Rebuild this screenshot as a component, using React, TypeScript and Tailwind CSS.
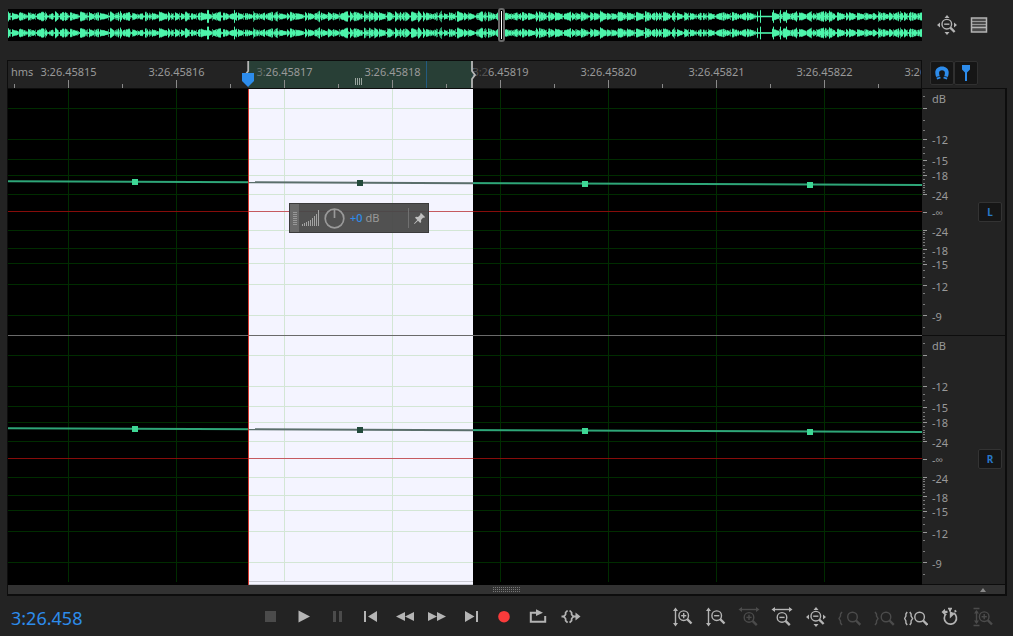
import type { ReactNode } from "react";

const times = ["15", "16", "17", "18", "19", "20", "21", "22", "23"];

const gridRows = [19, 50, 70, 86, 105, 141, 159, 174, 195, 226];
const gridCols = Array.from({ length: 24 }, (_, i) => 60 + i * 108);

const scaleLabels: [string, number][] = [
  ["dB", 14],
  ["-12", 55],
  ["-15", 76],
  ["-18", 91],
  ["-24", 111],
  ["-∞", 128],
  ["-24", 147],
  ["-18", 166],
  ["-15", 180],
  ["-12", 202],
  ["-9", 232],
];
const majorTicks = [19, 50, 71, 86, 105, 123, 141, 160, 175, 196, 226];
const minorTicks = [
  7, 31, 41, 58, 64, 76, 80, 83, 90, 94, 96, 98, 101, 103, 143, 145, 148, 150, 153, 156, 164, 168, 172,
  181, 188, 204, 215, 238,
];

type Peak = { outer: number; inner: number };

// peaks for the overview strip, one per column
function buildPeaks(count: number) {
  let seed = 97;
  const rand = () => {
    seed = (seed * 16807) % 2147483647;
    return seed / 2147483647;
  };
  const peaks: Peak[] = [];
  const push = (outer: number, inner: number) => peaks.push({ outer, inner });
  while (peaks.length < count) {
    const width = 2 + Math.floor(rand() * 7);
    const height = 3.6 + rand() * 2.2;
    const rising = rand() > 0.75;
    for (let i = 0; i < width; i++) {
      const step = rising ? width - 1 - i : i;
      const outer = height * (1 - (step / width) * 0.5) * (0.85 + rand() * 0.2);
      push(outer, outer * (rand() > 0.2 ? 0.85 : 0.45));
    }
    push(1.5 + rand() * 2.5, 0.6);
    if (rand() > 0.6) push(1, 0.6);
  }
  for (let i = 750; i < 764; i++) peaks[i] = { outer: 0.8, inner: 0.6 };
  for (const i of [199, 200, 226, 752, 765, 772, 778]) peaks[i] = { outer: 6.6, inner: 6 };
  return peaks.slice(0, count);
}

const peaks = buildPeaks(914);

function peakPath(center: number, key: keyof Peak) {
  return peaks
    .map((p, i) => `M${i + 0.5} ${(center - p[key]).toFixed(1)}V${(center + p[key]).toFixed(1)}`)
    .join("");
}

function Overview() {
  return (
    <div className="relative h-8 flex-1 bg-black">
      <svg className="block h-full w-full" viewBox="0 0 914 32" preserveAspectRatio="none">
        {[7.5, 24].map((y) => (
          <g key={y}>
            <path d={peakPath(y, "outer")} stroke="#2f9a6c" strokeWidth="1" />
            <path d={peakPath(y, "inner")} stroke="#4df5ab" strokeWidth="1" />
          </g>
        ))}
      </svg>
      <div className="absolute -top-px left-[54%] flex h-[34px] w-[7px] -translate-x-[4px] justify-center rounded-[3px] border-2 border-[#6a6a6a] bg-black py-px">
        <span className="w-px bg-white" />
      </div>
    </div>
  );
}

function Ruler() {
  return (
    <div className="relative h-[28px] flex-1 overflow-hidden border-t border-r border-[#0d0d0d] text-[11px] text-[#999]">
      <div className="absolute inset-y-0 left-[240px] w-[225px] bg-[#283f36]" />
      <span className="absolute top-[3px] left-[3px] leading-4">hms</span>
      <div className="relative flex h-full pl-[6px]">
        {times.map((t) => (
          <div key={t} className="relative flex h-full w-[108px] shrink-0 flex-col items-center justify-between pt-[3px]">
            <span className="pl-px leading-4">3:26.458{t}</span>
            <span className="h-[8px] w-px bg-[#8a8a8a]" />
            <span className="absolute bottom-0 left-0 h-[4px] w-px bg-[#8a8a8a]" />
          </div>
        ))}
      </div>
      <div className="absolute top-0 bottom-0 left-[418px] w-px bg-[#235a80]" />
      <div className="absolute bottom-[3px] left-[347px] flex gap-px">
        {[0, 1, 2, 3].map((i) => (
          <span key={i} className="h-[7px] w-px bg-[#9aa59f]" />
        ))}
      </div>
      <svg className="absolute top-0 left-[232px]" width="28" height="27" viewBox="0 0 28 27">
        <path d="M16 5H26V19H16Z" fill="#283f36" opacity="0.45" />
        <path d="M8.2 0V10L6 13" fill="none" stroke="#b5b5b5" strokeWidth="1.8" />
        <path d="M2 12H14V20L8 26L2 20Z" fill="#2d8ceb" />
      </svg>
      <svg className="absolute top-0 left-[461px]" width="18" height="27" viewBox="0 0 18 27">
        <path d="M5 0H18V19H5Z" fill="#232323" opacity="0.6" />
        <path d="M3 0V10L6 14L3 18V27" fill="none" stroke="#b5b5b5" strokeWidth="1.8" />
      </svg>
    </div>
  );
}

type GridProps = { color: string; zero: string; height: number; bottom: number };

function Grid({ color, zero, height, bottom }: GridProps) {
  return (
    <g shapeRendering="crispEdges">
      {gridCols.map((x) => (
        <line key={x} x1={x + 0.5} x2={x + 0.5} y1="0" y2={bottom} stroke={color} />
      ))}
      {gridRows.map((y) => (
        <line key={y} x1="0" x2="100%" y1={y + 0.5} y2={y + 0.5} stroke={color} />
      ))}
      <line x1="0" x2="100%" y1="122.5" y2="122.5" stroke={zero} />
      {height === 247 && <line x1="0" x2="100%" y1="246.5" y2="246.5" stroke="#6a6a6a" />}
    </g>
  );
}

function Samples({ line, dot }: { line: string; dot: string }) {
  return (
    <g>
      <line x1="0" y1="92.3" x2="914" y2="96" stroke={line} strokeWidth="2" />
      {[127, 352, 577, 802].map((x, i) => (
        <rect key={x} x={x - 3} y={90 + i} width="6" height="6" fill={dot} />
      ))}
    </g>
  );
}

function Channel({ id, height, bottom }: { id: string; height: number; bottom: number }) {
  return (
    <svg className="block w-full" height={height}>
      <clipPath id={id}>
        <rect x="240" y="0" width="225" height={height} />
      </clipPath>
      <Grid color="#002c00" zero="#860c0a" height={height} bottom={bottom} />
      <Samples line="#2ea678" dot="#3ed795" />
      <g clipPath={`url(#${id})`}>
        <rect x="240" y="0" width="225" height={height} fill="#f4f4ff" />
        <Grid color="#d3e6d5" zero="#c65a60" height={height} bottom={bottom} />
        <Samples line="#5a6e6b" dot="#234a3c" />
        {height > 247 && <path d="M240 245.5H465M240 248.5H465" stroke="#c9c9d2" />}
      </g>
      <line x1="240.5" x2="240.5" y1="0" y2={height} stroke="#d8392f" />
    </svg>
  );
}

function Hud() {
  return (
    <div className="absolute top-[114px] left-[281px] flex h-[30px] w-[140px] items-center border border-[#3b3b3b] bg-[#484848]/95 text-[11px]">
      <div className="flex h-full w-[9px] items-center justify-center bg-[#6a6a6a]">
        <svg width="4" height="13" viewBox="0 0 4 13">
          <path d="M1 0V13M3 0V13" stroke="#c4c4c4" strokeDasharray="1 1" />
        </svg>
      </div>
      <svg className="ml-[2px]" width="19" height="18" viewBox="0 0 19 18">
        <path
          d="M1.5 17V15M3.5 17V14M5.5 17V13M7.5 17V12M9.5 17V11M11.5 17V9M13.5 17V7M15.5 17V5M17.5 17V1"
          stroke="#a3a3a3"
        />
      </svg>
      <svg className="ml-[4px]" width="21" height="21" viewBox="0 0 21 21" fill="none" stroke="#999" strokeWidth="1.7">
        <circle cx="10.5" cy="10.5" r="9.3" />
        <path d="M10.5 2V10" />
      </svg>
      <span className="ml-[5px] font-medium text-[#2d8ceb]">+0</span>
      <span className="ml-[3px] text-[#999]">dB</span>
      <span className="ml-auto h-[20px] w-px bg-[#707070]" />
      <button aria-label="Pin" className="mr-[2px] ml-[4px]">
        <svg width="13" height="13" viewBox="0 0 13 13" fill="#c0c0c0">
          <path d="M8 1L12 5L11 6L10.2 5.6L8 8L8.2 10L7.2 11L5 8.7L1.5 12L1 11.5L4.3 8L2 5.8L3 4.8L5 5L7.4 2.8L7 2Z" />
        </svg>
      </button>
    </div>
  );
}

function Scale({ name, height }: { name: string; height: number }) {
  return (
    <div className="flex border-b border-[#0d0d0d]" style={{ height }}>
      <svg width="54" height={height - 1} fontSize="11" fill="#999">
        {majorTicks.map((y) => (
          <rect key={y} x="1" y={y} width="4" height="1" />
        ))}
        {minorTicks.map((y) => (
          <rect key={y} x="1" y={y} width="2" height="1" fill="#7c7c7c" />
        ))}
        {scaleLabels.map(([label, y]) => (
          <text key={y} x="10" y={y}>
            {label}
          </text>
        ))}
      </svg>
      <button className="mt-[113px] ml-[2px] h-[20px] w-[24px] rounded-xs border border-[#333] bg-[#161616] text-[10px] leading-none font-bold text-[#2878c8]">
        {name}
      </button>
    </div>
  );
}

type IconProps = { label: string; dim?: boolean; children: ReactNode };

function IconButton({ label, dim, children }: IconProps) {
  return (
    <button aria-label={label} disabled={dim} className={dim ? "text-[#4b4b4b]" : "text-[#b4b4b4]"}>
      <svg width="24" height="24" viewBox="0 0 24 24" fill="none" stroke="currentColor" strokeWidth="1.4">
        {children}
      </svg>
    </button>
  );
}

function Lens({ x, y, sign }: { x: number; y: number; sign?: "+" | "-" }) {
  return (
    <g transform={`translate(${x} ${y})`}>
      <circle r="4.8" />
      <path d="M3.5 3.5L7.8 7.8" strokeWidth="2.4" />
      {sign && <path d="M-2.6 0H2.6" />}
      {sign === "+" && <path d="M0 -2.6V2.6" />}
    </g>
  );
}

const vertical = (
  <>
    <path d="M5.5 4V20" />
    <path d="M5.5 2.5L8 6H3ZM5.5 21.5L8 18H3Z" fill="currentColor" stroke="none" />
  </>
);
const horizontal = (
  <>
    <path d="M3 4.5H21" />
    <path d="M1.5 4.5L5 2V7ZM22.5 4.5L19 2V7Z" fill="currentColor" stroke="none" />
  </>
);
const fourWays = (
  <>
    <path
      d="M12 2L14.5 5H9.5ZM12 22L14.5 19H9.5ZM2 12L5 9.5V14.5ZM22 12L19 9.5V14.5Z"
      fill="currentColor"
      stroke="none"
    />
    <Lens x={11.8} y={11.2} sign="-" />
  </>
);

function Transport() {
  return (
    <div className="flex w-[325px] justify-between">
      <IconButton label="Stop" dim>
        <path d="M7 6H18V17H7Z" fill="currentColor" stroke="none" />
      </IconButton>
      <IconButton label="Play">
        <path d="M7.5 5.5L19 11.5L7.5 17.5Z" fill="currentColor" stroke="none" />
      </IconButton>
      <IconButton label="Pause" dim>
        <path d="M8 6H11V17H8ZM14 6H17V17H14Z" fill="currentColor" stroke="none" />
      </IconButton>
      <IconButton label="Move to previous">
        <path d="M6 6H8V17H6ZM19 6V17L10 11.5Z" fill="currentColor" stroke="none" />
      </IconButton>
      <IconButton label="Rewind">
        <path d="M13 7V16L4 11.5ZM22 7V16L13 11.5Z" fill="currentColor" stroke="none" />
      </IconButton>
      <IconButton label="Fast forward">
        <path d="M3 7L12 11.5L3 16ZM12 7L21 11.5L12 16Z" fill="currentColor" stroke="none" />
      </IconButton>
      <IconButton label="Move to next">
        <path d="M6 6L15.5 11.5L6 17ZM17 6H19V17H17Z" fill="currentColor" stroke="none" />
      </IconButton>
      <IconButton label="Record">
        <circle cx="12" cy="11.7" r="5.8" fill="#f93b3b" stroke="none" />
      </IconButton>
      <IconButton label="Loop playback">
        <path d="M4.8 9V16.7H19.2V11M4.8 10V7.8H13" strokeWidth="2" />
        <path d="M10 4.2L17 7.8L10 11Z" fill="currentColor" stroke="none" />
      </IconButton>
      <IconButton label="Skip selection">
        <path d="M8.6 5.5L6.6 7.5V9.5L4.8 11.6L6.6 13.7V15.7L8.6 17.7" strokeWidth="1.7" />
        <path d="M10.6 5.5L12.6 7.5V9.5L14.4 11.6L12.6 13.7V15.7L10.6 17.7" strokeWidth="1.7" />
        <path d="M2.5 11.6H5M14 11.6H18" strokeWidth="2" />
        <path d="M16.5 7.6L21.5 11.6L16.5 15.6Z" fill="currentColor" stroke="none" />
      </IconButton>
    </div>
  );
}

function ZoomTools() {
  return (
    <div className="flex w-[325px] justify-between">
      <IconButton label="Zoom in amplitude">
        {vertical}
        <Lens x={13.7} y={10.7} sign="+" />
      </IconButton>
      <IconButton label="Zoom out amplitude">
        {vertical}
        <Lens x={13.7} y={10.7} sign="-" />
      </IconButton>
      <IconButton label="Zoom in time" dim>
        {horizontal}
        <Lens x={12} y={12.4} sign="+" />
      </IconButton>
      <IconButton label="Zoom out time">
        {horizontal}
        <Lens x={12} y={12.4} sign="-" />
      </IconButton>
      <IconButton label="Zoom out full">{fourWays}</IconButton>
      <IconButton label="Zoom in at in point" dim>
        <path d="M5 7L3.5 9V11L2 13.5L3.5 16V18L5 20" />
        <Lens x={15.5} y={12} />
      </IconButton>
      <IconButton label="Zoom in at out point" dim>
        <path d="M4 7L5.5 9V11L7 13.5L5.5 16V18L4 20" />
        <Lens x={15} y={12} />
      </IconButton>
      <IconButton label="Zoom to selection">
        <path d="M3.2 7L1.9 9V11L.6 13.5L1.9 16V18L3.2 20M5.8 7L7.1 9V11L8.6 13.5L7.1 16V18L5.8 20" />
        <Lens x={15.6} y={12} />
      </IconButton>
      <IconButton label="Zoom to time">
        <path d="M8.2 8.6A6.1 6.1 0 1 0 15.5 7.8" strokeWidth="1.7" />
        <path
          d="M10 2.8H14V4.6H13V6.5H11V4.6H10ZM11.8 13.4V6.5Q14.6 6.6 16.4 8.9ZM16 6L17.3 4.8L18.8 6.3L17.5 7.6ZM3.5 7L7 3.8V5.8H9.5V8H7V10.2Z"
          fill="currentColor"
          stroke="none"
        />
      </IconButton>
      <IconButton label="Reset zoom" dim>
        <path d="M2.5 3.5H8.5M2.5 20.5H8.5M5.5 6V18" />
        <path d="M5.5 5L8 8.5H3ZM5.5 19L8 15.5H3Z" fill="currentColor" stroke="none" />
        <Lens x={13.2} y={11.7} sign="+" />
      </IconButton>
    </div>
  );
}

export default function App() {
  return (
    <div className="min-h-screen overflow-hidden bg-[#232323] font-['Noto_Sans','Open_Sans',sans-serif] text-[#999]">
      <header className="flex items-center pt-[9px] pl-2">
        <Overview />
        <div className="flex w-[91px] items-center gap-[8px] pl-[13px]">
          <IconButton label="Zoom out full">{fourWays}</IconButton>
          <IconButton label="Show list">
            <path d="M5 5H19V19H5Z" fill="#4a4a4a" stroke="none" />
            <path d="M4.5 5H19.5V19H4.5ZM4 14.5H20" strokeWidth="1.5" />
            <path d="M5 8.5H19M5 11.5H19" strokeWidth="1" opacity="0.75" />
          </IconButton>
        </div>
      </header>

      <div className="mt-[19px] ml-[7px] flex border-l border-[#0d0d0d]">
        <Ruler />
        <div className="flex w-[91px] pt-px pl-[8px]">
          <button
            aria-label="Snapping"
            className="flex h-[24px] w-[24px] items-center justify-center rounded-xs border border-[#303030] bg-[#161616]"
          >
            <svg width="16" height="16" viewBox="0 0 16 16" fill="none">
              <path
                d="M8 1.5C12 1.5 14.7 4 14.7 7.6C14.7 10 14 12 12.8 14.5L9.2 13.3C10.2 11 10.9 9.7 10.9 8C10.9 6.2 9.8 5.2 8 5.2S5.1 6.2 5.1 8C5.1 9.7 5.8 11 6.8 13.3L3.2 14.5C2 12 1.3 10 1.3 7.6C1.3 4 4 1.5 8 1.5Z"
                fill="#2d8ceb"
              />
              <path d="M1.5 12.7L6.8 11M14.5 12.7L9.2 11" stroke="#161616" strokeWidth="0.8" />
            </svg>
          </button>
          <button
            aria-label="Playhead lock"
            className="flex h-[24px] w-[24px] items-center justify-center rounded-xs border border-[#303030] bg-[#161616]"
          >
            <svg width="16" height="18" viewBox="0 0 16 18" fill="#2d8ceb">
              <path d="M4 1H12V5.5L9 8.5V17H7V8.5L4 5.5Z" />
            </svg>
          </button>
        </div>
      </div>

      <main className="mr-[6px] ml-[7px] border border-r-2 border-b-2 border-[#0d0d0d]">
        <div className="flex">
          <div className="relative min-w-0 flex-1 bg-black">
            <Channel id="selection-left" height={247} bottom={247} />
            <Channel id="selection-right" height={249} bottom={246} />
            <Hud />
          </div>
          <div className="w-[83px]">
            <Scale name="L" height={247} />
            <Scale name="R" height={249} />
          </div>
        </div>
        <div className="relative flex h-[9px] items-center justify-center bg-[#323232]">
          <svg width="28" height="5" viewBox="0 0 28 5">
            <path d="M0 .5H28M0 2.5H28M0 4.5H28" stroke="#777" strokeDasharray="1 1" />
          </svg>
          <svg className="absolute right-[19px]" width="6" height="4" viewBox="0 0 6 4">
            <path d="M0 4L3 0L6 4Z" fill="#888" />
          </svg>
        </div>
      </main>

      <footer className="flex items-center pt-[8px] pr-[18px]">
        <output className="w-[258px] shrink-0 pt-[2px] pl-[11px] text-[18px] leading-6 text-[#2d8ceb]">3:26.458</output>
        <Transport />
        <div className="ml-auto">
          <ZoomTools />
        </div>
      </footer>
    </div>
  );
}
